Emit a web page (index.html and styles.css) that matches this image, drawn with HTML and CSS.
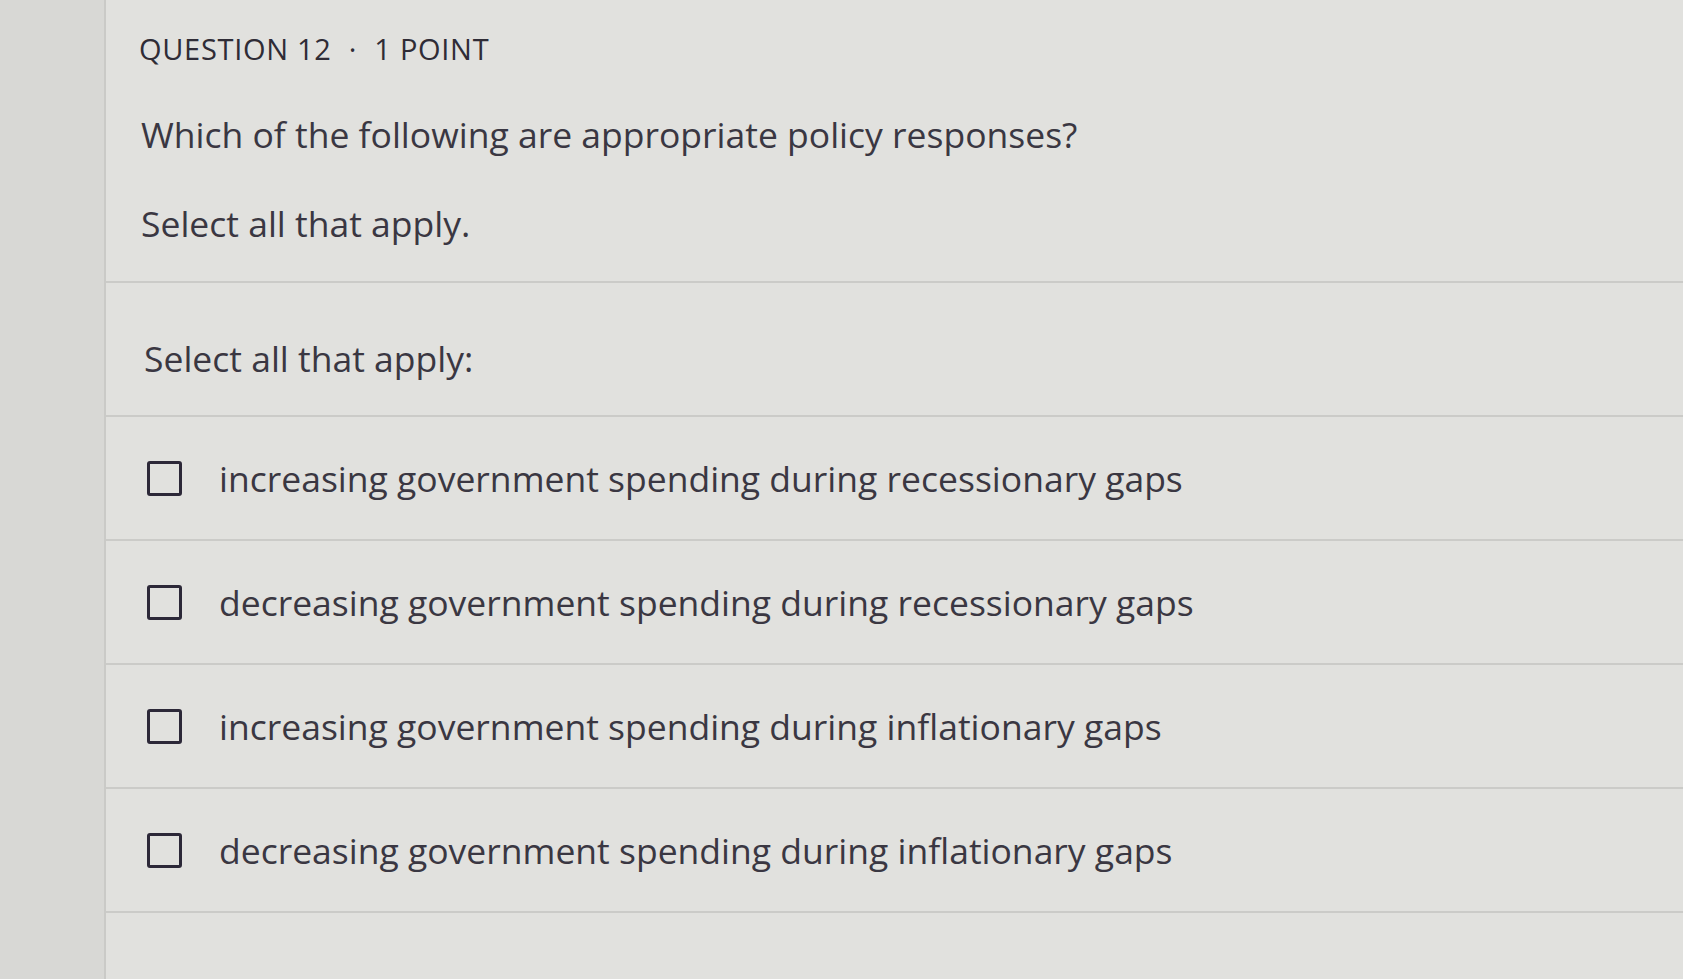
FILE: index.html
```html
<!DOCTYPE html>
<html lang="en">
<head>
<meta charset="utf-8">
<title>Question 12</title>
<link rel="stylesheet" href="styles.css">
</head>
<body>
<div class="page">
  <aside class="strip"></aside>
  <main class="panel">
    <section class="prompt">
      <div class="qhead">QUESTION 12 <span class="dot">·</span> 1 POINT</div>
      <p class="qtext">Which of the following are appropriate policy responses?</p>
      <p class="qtext">Select all that apply.</p>
    </section>
    <section class="instr">Select all that apply:</section>
    <ul class="options">
      <li class="opt"><span class="box"></span><span class="label">increasing government spending during recessionary gaps</span></li>
      <li class="opt"><span class="box"></span><span class="label">decreasing government spending during recessionary gaps</span></li>
      <li class="opt"><span class="box"></span><span class="label">increasing government spending during inflationary gaps</span></li>
      <li class="opt"><span class="box"></span><span class="label">decreasing government spending during inflationary gaps</span></li>
    </ul>
  </main>
</div>
</body>
</html>
```
FILE: styles.css
```css
html, body {
  margin: 0;
  padding: 0;
  height: 100%;
}
body {
  background: #dadad7;
  font-family: "Open Sans", "Noto Sans", sans-serif;
  color: #3a3742;
  overflow: hidden;
}
.page {
  display: flex;
  height: 979px;
}
.strip {
  width: 104px;
  flex: none;
  background: #d8d8d5;
  border-right: 2px solid #cacac7;
}
.panel {
  flex: 1;
  background: #e1e1de;
}
.prompt {
  padding: 31px 0 36px 33px;
  border-bottom: 2px solid #cbcbc8;
}
.qhead {
  font-size: 29px;
  line-height: 36px;
  letter-spacing: 0.7px;
  color: #2f2c36;
}
.dot {
  margin: 0 9px;
}
.qtext {
  margin: 45px 0 0 2px;
  font-size: 35.5px;
  line-height: 44px;
}
.instr {
  padding: 53px 0 35px 38px;
  font-size: 35.5px;
  line-height: 44px;
  border-bottom: 2px solid #cbcbc8;
}
.options {
  list-style: none;
  margin: 0;
  padding: 0;
}
.opt {
  display: flex;
  align-items: center;
  height: 122px;
  padding-left: 41px;
  border-bottom: 2px solid #cbcbc8;
}
.box {
  width: 29px;
  height: 29px;
  flex: none;
  border: 3px solid #2c2838;
  border-radius: 3px;
  margin-right: 37px;
}
.label {
  font-size: 35.5px;
  line-height: 44px;
}
```
